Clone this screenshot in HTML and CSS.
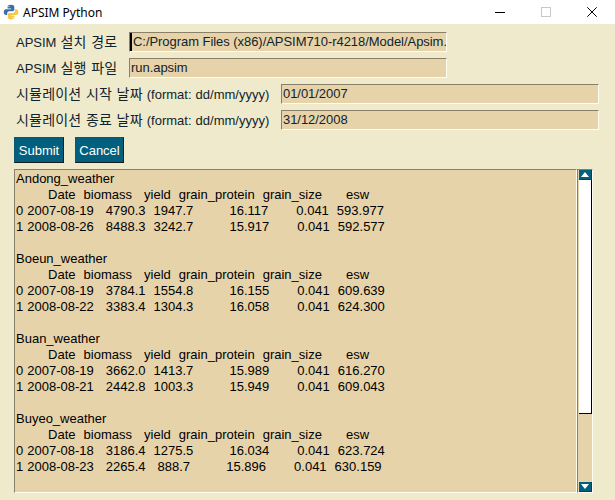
FILE: index.html
```html
<!DOCTYPE html>
<html lang="ko">
<head>
<meta charset="utf-8">
<title>APSIM Python</title>
<link rel="stylesheet" href="styles.css">
</head>
<body>
<div class="window">
  <header class="titlebar">
    <svg class="app-icon" viewBox="0 0 16 16" aria-hidden="true">
      <path class="py-blue" d="M7.9 0.8C5.5 0.8 4.6 1.6 4.6 3V4.6H8.1V5.2H3C1.6 5.2 0.8 6.3 0.8 8.1C0.8 9.9 1.6 11 3 11H4.2V9.2C4.2 8 5.2 7.2 6.2 7.2H9.7C10.7 7.2 11.3 6.5 11.3 5.6V3C11.3 1.7 10 0.8 7.9 0.8Z"/>
      <path class="py-yellow" transform="rotate(180 8.05 8.1)" d="M7.9 0.8C5.5 0.8 4.6 1.6 4.6 3V4.6H8.1V5.2H3C1.6 5.2 0.8 6.3 0.8 8.1C0.8 9.9 1.6 11 3 11H4.2V9.2C4.2 8 5.2 7.2 6.2 7.2H9.7C10.7 7.2 11.3 6.5 11.3 5.6V3C11.3 1.7 10 0.8 7.9 0.8Z"/>
      <circle class="py-eye" cx="6" cy="2.6" r="0.6"/>
      <circle class="py-eye" cx="10.1" cy="13.6" r="0.6"/>
    </svg>
    <span class="title">APSIM Python</span>
    <div class="controls">
      <span class="ctl"><svg width="10" height="10" viewBox="0 0 10 10"><path d="M0 5.5H10" class="ctl-line"/></svg></span>
      <span class="ctl"><svg width="10" height="10" viewBox="0 0 10 10"><rect x="0.5" y="0.5" width="9" height="9" class="ctl-disabled"/></svg></span>
      <span class="ctl"><svg width="10" height="10" viewBox="0 0 10 10"><path d="M0.3 0.3L9.7 9.7M9.7 0.3L0.3 9.7" class="ctl-line"/></svg></span>
    </div>
  </header>

  <main class="content">
    <div class="fields">
      <div class="row">
        <span class="lbl">APSIM <span class="ko">설치 경로</span></span>
        <div class="entry"><span class="caret"></span>C:/Program Files (x86)/APSIM710-r4218/Model/Apsim.</div>
      </div>
      <div class="row">
        <span class="lbl">APSIM <span class="ko">실행 파일</span></span>
        <div class="entry">run.apsim</div>
      </div>
      <div class="row wide">
        <span class="lbl"><span class="ko">시뮬레이션 시작 날짜</span> (format: dd/mm/yyyy)</span>
        <div class="entry">01/01/2007</div>
      </div>
      <div class="row wide">
        <span class="lbl"><span class="ko">시뮬레이션 종료 날짜</span> (format: dd/mm/yyyy)</span>
        <div class="entry">31/12/2008</div>
      </div>
    </div>

    <div class="buttons">
      <button class="btn submit" type="button">Submit</button>
      <button class="btn cancel" type="button">Cancel</button>
    </div>

    <div class="output">
      <div class="text">Andong_weather
        Date  biomass   yield  grain_protein  grain_size      esw
0 2007-08-19   4790.3  1947.7         16.117       0.041  593.977
1 2008-08-26   8488.3  3242.7         15.917       0.041  592.577

Boeun_weather
        Date  biomass   yield  grain_protein  grain_size      esw
0 2007-08-19   3784.1  1554.8         16.155       0.041  609.639
1 2008-08-22   3383.4  1304.3         16.058       0.041  624.300

Buan_weather
        Date  biomass   yield  grain_protein  grain_size      esw
0 2007-08-19   3662.0  1413.7         15.989       0.041  616.270
1 2008-08-21   2442.8  1003.3         15.949       0.041  609.043

Buyeo_weather
        Date  biomass   yield  grain_protein  grain_size      esw
0 2007-08-18   3186.4  1275.5         16.034       0.041  623.724
1 2008-08-23   2265.4   888.7         15.896       0.041  630.159
</div>
      <div class="scrollbar">
        <div class="sb-btn"><svg width="8" height="5" viewBox="0 0 8 5"><polygon points="4,0 8,5 0,5" class="arrow"/></svg></div>
        <div class="thumb"></div>
        <div class="trough"></div>
        <div class="sb-btn"><svg width="8" height="5" viewBox="0 0 8 5"><polygon points="0,0 8,0 4,5" class="arrow"/></svg></div>
      </div>
    </div>
  </main>
</div>
</body>
</html>
```
FILE: styles.css
```css
* { box-sizing: border-box; }

html, body {
  margin: 0;
  padding: 0;
}

body {
  width: 615px;
  height: 500px;
  overflow: hidden;
  background: #EFEACC;
  font-family: "Liberation Sans", Arial, "Noto Sans CJK KR", sans-serif;
}

.titlebar {
  height: 24px;
  background: #ffffff;
  display: flex;
  align-items: center;
}

.app-icon {
  width: 16px;
  height: 16px;
  margin-left: 3px;
  margin-right: 4px;
}
.py-blue { fill: #3A6FA6; }
.py-yellow { fill: #F6C940; }
.py-eye { fill: #ffffff; }

.title {
  font-family: "Noto Sans", "Open Sans", sans-serif;
  font-size: 12px;
  color: #000000;
}

.controls {
  margin-left: auto;
  display: flex;
  height: 24px;
}
.ctl {
  width: 46px;
  height: 24px;
  display: flex;
  align-items: center;
  justify-content: center;
}
.ctl-line { stroke: #000000; stroke-width: 1; fill: none; }
.ctl-disabled { stroke: #C8C8C8; stroke-width: 1; fill: none; }

.content {
  padding: 8px 0 0 14px;
  display: flex;
  flex-direction: column;
}

.fields {
  display: flex;
  flex-direction: column;
  gap: 6px;
}

.row {
  display: grid;
  grid-template-columns: 115px 318px;
  align-items: center;
  height: 20px;
}
.row.wide {
  grid-template-columns: 267px 318px;
}

.lbl {
  font-size: 13px;
  color: #10232C;
  padding-left: 2px;
  white-space: nowrap;
  line-height: 18px;
  word-spacing: 0.4px;
}

.ko {
  font-family: "Noto Sans CJK KR", sans-serif;
  font-size: 14px;
  letter-spacing: 0.2px;
}

.entry {
  height: 20px;
  background: #E6D3A9;
  border: 1px solid;
  border-color: #8A8069 #FFFDF2 #FFFDF2 #8A8069;
  padding: 0 1px;
  font-size: 13px;
  line-height: 18px;
  color: #10232C;
  white-space: nowrap;
  overflow: hidden;
  letter-spacing: -0.05px;
}

.caret {
  display: inline-block;
  width: 2px;
  height: 18px;
  background: #000000;
  vertical-align: top;
  margin-left: -1px;
  margin-right: 1px;
}

.buttons {
  display: flex;
  gap: 11px;
  margin-top: 7px;
}

.btn {
  height: 26px;
  padding: 0;
  background: #02607E;
  color: #ffffff;
  border: 1px solid;
  border-color: #0A5872 #1C1C1C #1C1C1C #0A5872;
  font-family: "Liberation Sans", Arial, sans-serif;
  font-size: 13px;
}
.btn.submit { width: 50px; }
.btn.cancel { width: 49px; }

.output {
  display: flex;
  margin-top: 6px;
  height: 324px;
}

.text {
  width: 563px;
  height: 324px;
  overflow: hidden;
  background: #E6D3A9;
  border: 1px solid;
  border-color: #8A8069 #FFFDF2 #FFFDF2 #8A8069;
  padding: 1px 1px;
  font-size: 13px;
  line-height: 16px;
  color: #000000;
  white-space: pre;
  word-spacing: 0.4px;
}

.scrollbar {
  width: 16px;
  height: 324px;
  display: flex;
  flex-direction: column;
  background: #E6D3A9;
  border-left: 1px solid #8A8069;
  border-top: 1px solid #8A8069;
  border-right: 1px solid #FFFDF2;
  border-bottom: 1px solid #FFFDF2;
  padding-left: 1px;
}

.sb-btn {
  height: 10px;
  width: 13px;
  background: #02607E;
  border-right: 1px solid #0A3E50;
  border-bottom: 1px solid #0A3E50;
  display: flex;
  align-items: center;
  justify-content: center;
}
.arrow { fill: #ffffff; }

.thumb {
  height: 234px;
  width: 13px;
  background: #ffffff;
  border-right: 1px solid #000000;
  border-bottom: 1px solid #000000;
}

.trough {
  flex: 1;
}
```
